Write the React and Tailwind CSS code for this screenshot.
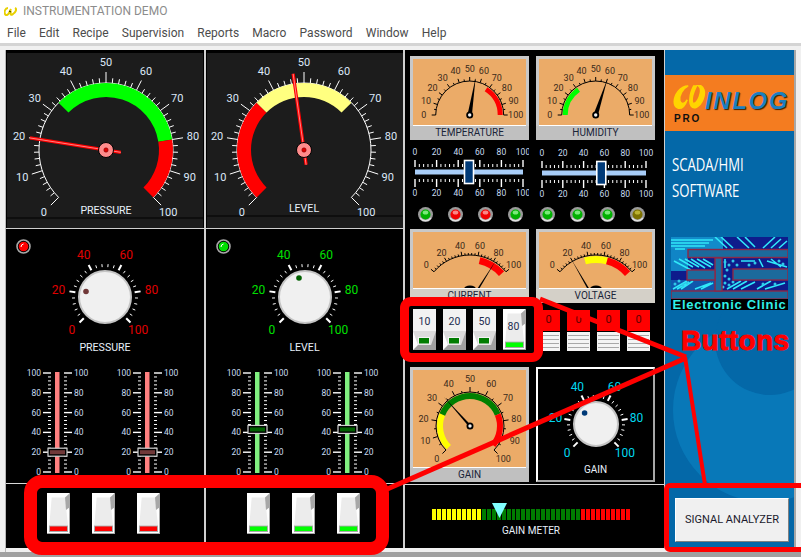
const pt = (cx, cy, r, deg) => {
  const a = (deg * Math.PI) / 180;
  return [cx + r * Math.sin(a), cy - r * Math.cos(a)];
};

const range = (from, to, step) => {
  const out = [];
  for (let v = from; v <= to + 0.001; v += step) out.push(v);
  return out;
};

function bandPath(cx, cy, r1, r2, a1, a2) {
  const [x1, y1] = pt(cx, cy, r2, a1);
  const [x2, y2] = pt(cx, cy, r2, a2);
  const [x3, y3] = pt(cx, cy, r1, a2);
  const [x4, y4] = pt(cx, cy, r1, a1);
  const large = a2 - a1 > 180 ? 1 : 0;
  return `M${x1} ${y1}A${r2} ${r2} 0 ${large} 1 ${x2} ${y2}L${x3} ${y3}A${r1} ${r1} 0 ${large} 0 ${x4} ${y4}Z`;
}

function Scale({ cx, cy, r, sweep, labels, minor, majorLen, minorLen, labelR, fontSize, color, stroke, bands = [], bandR = [r - 14, r], lineW = 1 }) {
  const ang = (v) => -sweep + (v / 100) * sweep * 2;
  const [ax, ay] = pt(cx, cy, r, ang(0));
  const [bx, by] = pt(cx, cy, r, ang(100));
  return (
    <g>
      <path d={`M${ax} ${ay}A${r} ${r} 0 ${sweep > 90 ? 1 : 0} 1 ${bx} ${by}`} fill="none" stroke={stroke} strokeWidth={lineW} />
      {bands.map((b) => (
        <path key={b.from} d={bandPath(cx, cy, bandR[0], bandR[1], ang(b.from), ang(b.to))} fill={b.color} />
      ))}
      {range(0, 100, minor).map((v) => {
        const major = labels.includes(v);
        const [x1, y1] = pt(cx, cy, r, ang(v));
        const [x2, y2] = pt(cx, cy, r + (major ? majorLen : minorLen), ang(v));
        return <line key={v} x1={x1} y1={y1} x2={x2} y2={y2} stroke={stroke} strokeWidth={lineW} />;
      })}
      {labels.map((v) => {
        const [x, y] = pt(cx, cy, labelR, ang(v));
        return (
          <text key={v} x={x} y={y} fill={color} fontSize={fontSize} textAnchor="middle" dominantBaseline="central">
            {v}
          </text>
        );
      })}
    </g>
  );
}

function BigGauge({ cx, value, bands, label, labelY, lineY }) {
  const cy = 100;
  const a = -135 + value * 2.7;
  const [tx, ty] = pt(cx, cy, 77, a);
  const [bx, by] = pt(cx, cy, 15, a + 180);
  return (
    <svg width="197" height="178" className="block">
      <rect x="1" y="3" width="196" height="175" fill="#1c1c1c" />
      <line x1="1" x2="197" y1={lineY} y2={lineY} stroke="#000" />
      <Scale cx={cx} cy={cy} r={67} sweep={135} labels={range(0, 100, 10)} minor={2} majorLen={11} minorLen={5} labelR={88} fontSize={11} color="#dce8f8" stroke="#fff" bands={bands} bandR={[53, 67]} />
      <text x={cx} y={labelY} fill="#e8f0fa" fontSize="10.6" textAnchor="middle" dominantBaseline="central">{label}</text>
      <line x1={tx} y1={ty} x2={bx} y2={by} stroke="#ff0000" strokeWidth="3.2" />
      <line x1={tx} y1={ty} x2={bx} y2={by} stroke="#ff8080" strokeWidth="1" />
      <circle cx={cx} cy={cy} r="7.5" fill="#ff8c8c" stroke="#000" strokeWidth="1" />
      <circle cx={cx} cy={cy} r="2.2" fill="#e00000" stroke="#600" strokeWidth="0.5" />
    </svg>
  );
}

function Led({ color, glow, size = 15 }) {
  return (
    <svg width={size} height={size} viewBox="0 0 15 15" className="block shrink-0">
      <circle cx="7.5" cy="7.5" r="7.5" fill="#9a9a9a" />
      <path d="M2 11a7 7 0 0 0 11 0" fill="none" stroke="#e0e0e0" strokeWidth="1.4" />
      <circle cx="7.5" cy="7.5" r="5" fill={color} />
      <ellipse cx="7.5" cy="5.5" rx="2.8" ry="2" fill={glow} opacity="0.75" />
    </svg>
  );
}

function StatusLamp({ color }) {
  return (
    <svg width="15" height="15" className="block">
      <circle cx="7.5" cy="7.5" r="6.5" fill="#000" stroke="#a8a8a8" strokeWidth="1.6" />
      <circle cx="7.5" cy="7.5" r="4.8" fill={color} />
      <path d="M5 8a3 3 0 0 1 2.5-3" fill="none" stroke="#fff" strokeWidth="1" />
    </svg>
  );
}

function Knob({ width, height, cx, cy, r, dot, dotColor, labelColor, labelR, fontSize = 12 }) {
  const ang = (v) => -135 + v * 2.7;
  return (
    <svg width={width} height={height} className="block overflow-visible">
      {range(0, 100, 4).map((v) => {
        const major = v % 20 === 0;
        const [x1, y1] = pt(cx, cy, r + 4, ang(v));
        const [x2, y2] = pt(cx, cy, r + (major ? 10 : 7), ang(v));
        return <line key={v} x1={x1} y1={y1} x2={x2} y2={y2} stroke="#fff" strokeWidth={major ? 2 : 1} />;
      })}
      {range(0, 100, 20).map((v) => {
        const [x, y] = pt(cx, cy, labelR, ang(v));
        return (
          <text key={v} x={x} y={y} fill={labelColor} fontSize={fontSize} textAnchor="middle" dominantBaseline="central">{v}</text>
        );
      })}
      <circle cx={cx} cy={cy} r={r} fill="#f0f0f0" stroke="#c4c4c4" strokeWidth="2" />
      <circle cx={cx + dot[0]} cy={cy + dot[1]} r="2.8" fill={dotColor} />
    </svg>
  );
}

function VSlider({ value, track, thumb }) {
  const cx = 45;
  const y = (v) => 8 + (100 - v) * 0.99;
  return (
    <svg width="90" height="115" className="block">
      {range(0, 100, 4).map((v) => (
        <g key={v}>
          {v % 20 === 0 ? null : <line x1={cx - 9} x2={cx - 6} y1={y(v)} y2={y(v)} stroke="#fff" />}
          {v % 20 === 0 ? null : <line x1={cx + 7} x2={cx + 10} y1={y(v)} y2={y(v)} stroke="#fff" />}
        </g>
      ))}
      {range(0, 100, 20).map((v) => (
        <g key={v}>
          <line x1={cx - 14} x2={cx - 6} y1={y(v)} y2={y(v)} stroke="#fff" strokeWidth="1.4" />
          <line x1={cx + 7} x2={cx + 15} y1={y(v)} y2={y(v)} stroke="#fff" strokeWidth="1.4" />
          <text x={cx - 16} y={y(v)} fill="#c8dcf0" fontSize="8.5" textAnchor="end" dominantBaseline="central">{v}</text>
          <text x={cx + 17} y={y(v)} fill="#c8dcf0" fontSize="8.5" dominantBaseline="central">{v}</text>
        </g>
      ))}
      <rect x={cx - 2} y="7" width="4.5" height="101" fill={track} />
      <rect x={cx - 9} y={y(value) - 4} width="19" height="8" fill="#000" stroke="#d0d0d0" strokeWidth="1.2" />
      <rect x={cx - 7} y={y(value) - 2} width="15" height="4" fill={thumb} />
    </svg>
  );
}

function HSlider({ x0, x1, value, trackY }) {
  const x = (v) => x0 + ((x1 - x0) * v) / 100;
  return (
    <svg width="119" height="52" className="block">
      {range(0, 100, 4).map((v) => {
        const major = v % 20 === 0;
        return (
          <g key={v}>
            <line x1={x(v)} x2={x(v)} y1={major ? trackY - 12 : trackY - 8} y2={trackY - 5} stroke="#fff" strokeWidth={major ? 1.4 : 1} />
            <line x1={x(v)} x2={x(v)} y1={trackY + 7} y2={major ? trackY + 15 : trackY + 10} stroke="#fff" strokeWidth={major ? 1.4 : 1} />
          </g>
        );
      })}
      {range(0, 100, 20).map((v) => (
        <g key={v}>
          <text x={x(v)} y={trackY - 20} fill="#c8dcf0" fontSize="8.5" textAnchor="middle" dominantBaseline="central">{v}</text>
          <text x={x(v)} y={trackY + 21} fill="#c8dcf0" fontSize="8.5" textAnchor="middle" dominantBaseline="central">{v}</text>
        </g>
      ))}
      <rect x={x0} y={trackY - 2.5} width={x1 - x0} height="5" fill="#a8cdf8" />
      <rect x={x(value) - 4.5} y={trackY - 11.5} width="9" height="23" fill="#003a78" stroke="#fff" strokeWidth="1.6" />
    </svg>
  );
}

function Rocker({ color, text }) {
  return (
    <svg width="23" height="41" className="block shrink-0">
      <rect width="23" height="41" fill="#fff" />
      <path d="M22.5 0V41M0 40.5H23" stroke="#a8a8a8" />
      <path d="M4.7 4.5H18L21 32H2.3Z" fill="#ececec" />
      <path d="M18 4.5L23 0V14L19 17Z" fill="#a8a8a8" />
      <rect x="2.5" y="33" width="18" height="5.5" fill={color} stroke="#a8a8a8" />
      {text ? <text x="10.5" y="17" fill="#1c2c50" fontSize="10.5" textAnchor="middle" dominantBaseline="central">{text}</text> : null}
    </svg>
  );
}

function PressedToggle({ text }) {
  return (
    <svg width="23" height="41" className="block shrink-0">
      <rect width="23" height="41" fill="#f2f2f2" />
      <path d="M0 22L5 36L0 41Z" fill="#fff" />
      <path d="M0 22H23L18 36H5Z" fill="#dcdcdc" />
      <path d="M23 22V41H0L5 36H18Z" fill="#a0a0a0" />
      <rect x="5.5" y="28.5" width="11" height="6.5" fill="#007c00" stroke="#f4f4f4" />
      <text x="11.5" y="12.5" fill="#1c2c50" fontSize="10.5" textAnchor="middle" dominantBaseline="central">{text}</text>
    </svg>
  );
}

function MeterPanel({ label, labelBg, height, children }) {
  return (
    <div className="w-[119px] border-[3px] border-b-0 border-[#c8c8c8] flex flex-col">
      <div className="bg-[#ebab68] overflow-hidden border-b border-white" style={{ height }}>
        {children}
      </div>
      <div className={`h-[14px] -mx-[3px] flex items-center justify-center text-[10px] leading-none text-[#1a2438] ${labelBg}`}>{label}</div>
    </div>
  );
}

function Needle({ cx, cy, len, deg, w = 2.2 }) {
  const [tx, ty] = pt(cx, cy, len, deg);
  const [ax, ay] = pt(cx, cy, w, deg - 90);
  const [bx, by] = pt(cx, cy, w, deg + 90);
  return <polygon points={`${tx},${ty} ${ax},${ay} ${bx},${by}`} fill="#000" />;
}

function Hub({ cx, cy }) {
  return <circle cx={cx} cy={cy} r="2.6" fill="#f0f0f0" stroke="#000" strokeWidth="1.8" />;
}

function HalfMeter({ value, bands }) {
  const cx = 56.7;
  const cy = 56;
  return (
    <svg width="113" height="67" className="block">
      <Scale cx={cx} cy={cy} r={34} sweep={90} labels={range(0, 100, 10)} minor={5} majorLen={4} minorLen={2} labelR={46} fontSize={9} color="#3a2a1a" stroke="#000" bands={bands} bandR={[28, 33]} />
      <Needle cx={cx} cy={cy} len={38} deg={-90 + value * 1.8} />
      <Hub cx={cx} cy={cy} />
    </svg>
  );
}

function ShallowMeter({ value, bands }) {
  const cx = 57;
  const cy = 70;
  const deg = -50 + value;
  return (
    <svg width="113" height="57" className="block">
      <Scale cx={cx} cy={cy} r={47} sweep={50} labels={range(0, 100, 20)} minor={4} majorLen={4} minorLen={2} labelR={57} fontSize={9} color="#3a2a1a" stroke="#000" bands={bands} bandR={[39, 46]} />
      <Needle cx={cx} cy={cy} len={50} deg={deg} w={1.2} />
      <ellipse cx={cx} cy={57} rx="6" ry="3.5" fill="#000" />
    </svg>
  );
}

function RoundMeter() {
  const cx = 57;
  const cy = 56;
  return (
    <svg width="113" height="96" className="block">
      <Scale cx={cx} cy={cy} r={34} sweep={135} labels={range(0, 100, 10)} minor={5} majorLen={5} minorLen={2} labelR={47} fontSize={9} color="#3a2a1a" stroke="#000"
        bands={[
          { from: 0, to: 25, color: '#ffff00' },
          { from: 25, to: 75, color: '#008000' },
          { from: 75, to: 98, color: '#ff0000' },
        ]}
        bandR={[27, 33]} />
      <Needle cx={cx} cy={cy} len={39} deg={-42} w={1.3} />
      <Hub cx={cx} cy={cy} />
    </svg>
  );
}

function InstrumentColumn({ width, gauge, lamp, knobLabel, knobColor, knobDot, dotColor, sliderValue, track, thumb, rockerColor }) {
  return (
    <div className="flex flex-col bg-black shrink-0" style={{ width }}>
      {gauge}
      <div className="h-px bg-[#d0d0d0] w-full" />
      <div className="h-[254px] flex flex-col">
        <div className="mt-[10px] ml-[10px] h-[15px]">
          <StatusLamp color={lamp} />
        </div>
        <div className="-mt-[4px] self-center">
          <Knob width={130} height={92} cx={65} cy={47} r={26} dot={knobDot} dotColor={dotColor} labelColor={knobColor} labelR={47} />
        </div>
        <div className="h-[12px] text-center text-[10.6px] leading-[12px] text-[#e8f0fa]">{knobLabel}</div>
        <div className="flex pl-[6px] mt-[11px]">
          <VSlider value={sliderValue} track={track} thumb={thumb} />
          <VSlider value={sliderValue} track={track} thumb={thumb} />
        </div>
      </div>
      <div className="h-px bg-[#d8d8d8] w-full" />
      <div className="flex-1 flex gap-[22px] pl-[41px] pt-[9px]">
        <Rocker color={rockerColor} />
        <Rocker color={rockerColor} />
        <Rocker color={rockerColor} />
      </div>
    </div>
  );
}

function RedDisplay() {
  return (
    <div className="w-[23px] shrink-0 mt-px flex flex-col gap-px">
      <div className="h-[21px] bg-[#ff0000] flex items-center justify-center text-[11px] text-[#600000]">0</div>
      <div className="h-[19px] bg-[#f4f4f4] flex flex-col justify-center gap-[3px] px-[1px]">
        <div className="h-px bg-[#a8a8a8]" />
        <div className="h-px bg-[#a8a8a8]" />
        <div className="h-px bg-[#a8a8a8]" />
        <div className="h-px bg-[#a8a8a8]" />
      </div>
    </div>
  );
}

function InstrumentsPanel() {
  const ledGreen = { color: '#00b000', glow: '#a0ffa0' };
  const ledRed = { color: '#f00000', glow: '#ffb0b0' };
  const ledYellow = { color: '#7c7000', glow: '#d0c840' };
  return (
    <div className="w-[259px] shrink-0 bg-black flex flex-col">
      <div className="h-[434px] flex flex-col pl-[5px] pt-[6px]">
        <div className="flex gap-[7px]">
          <MeterPanel label="TEMPERATURE" labelBg="bg-[#c0c0c0]" height={67}>
            <HalfMeter value={55} bands={[{ from: 68, to: 100, color: '#ff0000' }]} />
          </MeterPanel>
          <MeterPanel label="HUMIDITY" labelBg="bg-[#c0c0c0]" height={67}>
            <HalfMeter value={60} bands={[{ from: 0, to: 31, color: '#00ff00' }]} />
          </MeterPanel>
        </div>
        <div className="flex gap-[7px] mt-[8px]">
          <HSlider x0={5} x1={113} value={50} trackY={24} />
          <HSlider x0={6} x1={110} value={57} trackY={25} />
        </div>
        <div className="flex gap-[17px] mt-[7px] pl-[7.5px]">
          <div className="flex gap-[15px]">
            <Led {...ledGreen} />
            <Led {...ledRed} />
            <Led {...ledRed} />
            <Led {...ledGreen} />
          </div>
          <div className="flex gap-[15px]">
            <Led {...ledGreen} />
            <Led {...ledGreen} />
            <Led {...ledGreen} />
            <Led {...ledYellow} />
          </div>
        </div>
        <div className="flex gap-[7px] mt-[7px]">
          <MeterPanel label="CURRENT" labelBg="bg-[#d4d0c8]" height={57}>
            <ShallowMeter value={82} bands={[{ from: 63, to: 98, color: '#ff0000' }]} />
          </MeterPanel>
          <MeterPanel label="VOLTAGE" labelBg="bg-[#d4d0c8]" height={57}>
            <ShallowMeter value={20} bands={[{ from: 35, to: 65, color: '#ffff00' }, { from: 65, to: 98, color: '#ff0000' }]} />
          </MeterPanel>
        </div>
        <div className="flex gap-[7px] mt-[6px] pl-[3px]">
          <PressedToggle text="10" />
          <PressedToggle text="20" />
          <PressedToggle text="50" />
          <Rocker color="#00ff00" text="80" />
          <div className="w-[4px] -ml-[7px]" />
          <RedDisplay />
          <RedDisplay />
          <RedDisplay />
          <RedDisplay />
        </div>
        <div className="flex gap-[7px] mt-[16px]">
          <MeterPanel label="GAIN" labelBg="bg-[#c0c0c0]" height={98}>
            <RoundMeter />
          </MeterPanel>
          <div className="w-[119px] h-[115px] border-2 border-white border-r-[#a8a8a8] border-b-[#a8a8a8] flex flex-col items-center">
            <Knob width={110} height={92} cx={55} cy={55} r={22} dot={[-11.4, -11]} dotColor="#003a78" labelColor="#00d8f0" labelR={41} />
            <div className="text-[10px] leading-[12px] text-[#e8f0fa] mt-[3px]">GAIN</div>
          </div>
        </div>
      </div>
      <div className="h-px bg-[#d8d8d8]" />
      <div className="ml-[27px] w-[198px] mt-[24px] relative">
        <div className="flex gap-px h-[11px]">
          {range(1, 40, 1).map((i) => (
            <div key={i} className={`w-[4px] ${i <= 10 ? 'bg-[#ffff00]' : i <= 30 ? 'bg-[#007c00]' : 'bg-[#ff0000]'}`} />
          ))}
        </div>
        <svg width="15" height="15" className="absolute left-[60px] -top-[6px]">
          <polygon points="0,0 15,0 7.5,15" fill="#80ffff" />
        </svg>
        <div className="mt-[5px] text-center text-[10px] leading-[12px] text-[#e8f0fa]">GAIN METER</div>
      </div>
    </div>
  );
}

function CircuitLogo() {
  const bars = [
    [17, 12.5, 100, 8],
    [0, 54, 117, 8],
    [44, 21, 7, 33],
    [16, 33, 28, 10],
    [62, 32, 55, 11],
  ];
  const traces = [
    'M0 3H42M0 6H38M0 9H34M4 12H14M44 0L56 11M50 0L62 11M66 0L78 11M74 0L84 10M92 11L104 0M100 11L110 2M108 11L116 4',
    'M3 24L20 33M8 22L22 30M14 22L28 30M20 22L34 31M26 22L40 30M32 22L42 28',
    'M2 52L16 44M6 52L18 45M10 52L22 44M24 52L40 46M30 52L42 46M56 52L70 44M62 52L76 44M70 52L84 45M86 52L100 44M94 52L114 46',
    'M54 22V31M70 24H84M96 24L116 30M100 22L110 30M88 22L92 30',
  ];
  const dots = [
    [54, 25], [58, 28], [62, 24], [66, 28], [56, 33], [54, 39], [58, 42], [54, 46], [58, 48], [62, 45], [52, 50],
    [12, 48], [8, 44], [16, 46], [4, 47], [92, 47], [104, 47], [108, 24], [112, 27], [78, 28], [84, 26],
  ];
  return (
    <svg width="117" height="62" className="block">
      <rect width="117" height="62" fill="#0e1c8c" />
      <rect width="52" height="12" fill="#14a8d8" opacity="0.8" />
      <rect y="12" width="17" height="22" fill="#12a0d4" opacity="0.8" />
      <rect y="43" width="44" height="11" fill="#12a0d4" opacity="0.45" />
      <path d={traces.join('')} stroke="#30e8f8" strokeWidth="1.6" fill="none" />
      {dots.map(([x, y]) => (
        <circle key={`${x}-${y}`} cx={x} cy={y} r="1.5" fill="#30c8e8" />
      ))}
      {bars.map(([x, y, w, h]) => (
        <rect key={`${x}-${y}`} x={x} y={y} width={w} height={h} fill="#1c6a9c" stroke="#8c2848" strokeWidth="1.4" />
      ))}
    </svg>
  );
}

function WinlogLogo() {
  return (
    <svg width="34" height="26" viewBox="0 0 34 28" className="block shrink-0">
      <path d="M15 1C6 1 0 11 0 18C0 25 6 27 10 23C12 21 13 19 14 16C11 21 7 21 6 17C5 11 9 4 15 1Z" fill="#ffd400" stroke="#ffd400" strokeWidth="1.6" />
      <path d="M17 14C16 22 19 26 24 24C30 21 34 11 32 5C31 2 28 0 25 0C28 2 29 5 28 9C27 14 24 20 21 20C19 20 19 16 20 11C21 7 23 3 24 1H21C19 5 17 10 17 14Z" fill="#ffd400" stroke="#ffd400" strokeWidth="1.6" />
    </svg>
  );
}

function SidePanel() {
  return (
    <div className="w-[129px] shrink-0 ml-px relative overflow-hidden bg-[#0468a8] flex flex-col">
      <svg width="129" height="498" className="absolute left-0 top-0">
        <circle cx="100" cy="360" r="92" fill="#0878b8" />
        <circle cx="105" cy="290" r="55" fill="#0468a8" />
      </svg>
      <div className="relative mt-[25px] h-[56px] bg-[#f47c20] pl-[8px] pt-[10px]">
        <div className="flex h-[26px]">
          <WinlogLogo />
          <span className="text-[24px] leading-none font-bold italic text-[#1b7fc0] mt-[4px] -ml-[2px] tracking-[1.6px] [font-family:'Liberation_Sans',sans-serif] [text-shadow:1px_1px_1px_#402000]">INLOG</span>
        </div>
        <div className="text-[10px] leading-none font-bold tracking-[1.8px] text-[#101010] mt-[3px] ml-px [font-family:'Liberation_Sans',sans-serif]">PRO</div>
      </div>
      <div className="relative mt-[20px] ml-[7px] text-[18px] leading-[26px] text-white origin-left scale-x-[0.73] whitespace-nowrap [font-family:'Open_Sans',sans-serif]">
        <div>SCADA/HMI</div>
        <div>SOFTWARE</div>
      </div>
      <div className="relative mt-[34px] ml-[6px]">
        <CircuitLogo />
        <div className="w-[117px] h-[11px] bg-black text-[13px] leading-[11px] font-bold text-[#30f0e8] tracking-[0.7px] whitespace-nowrap text-center [font-family:'Liberation_Sans',sans-serif]">Electronic Clinic</div>
      </div>
      <button className="relative mt-auto mb-[6px] ml-[10px] w-[114px] h-[44px] shrink-0 bg-[#f0f0f0] border border-t-white border-l-white border-r-[#808080] border-b-[#808080] text-[11px] text-[#1a1a2c]">
        SIGNAL ANALYZER
      </button>
    </div>
  );
}

function Annotations() {
  return (
    <>
      <svg width="801" height="557" className="absolute left-0 top-0 pointer-events-none">
        <line x1="540" y1="299" x2="686" y2="357" stroke="#ff0000" strokeWidth="5" />
        <line x1="385" y1="490" x2="686" y2="358" stroke="#ff0000" strokeWidth="5" />
        <line x1="685" y1="357" x2="705" y2="485" stroke="#ff0000" strokeWidth="4" />
      </svg>
      <div className="absolute left-[400px] top-[297px] w-[143px] h-[65px] border-[9px] border-[#ff0000] rounded-[11px]" />
      <div className="absolute left-[24px] top-[475px] w-[365px] h-[80px] border-[13px] border-[#ff0000] rounded-[18px]" />
      <div className="absolute left-[664px] top-[483px] w-[150px] h-[69px] border-[5px] border-[#ff0000] rounded-[6px]" />
      <div className="absolute left-[681px] top-[325px] text-[28px] leading-[32px] font-bold text-[#ff0000] tracking-[0.4px] [-webkit-text-stroke:1px_#ff0000] [font-family:'Liberation_Sans',sans-serif]">Buttons</div>
    </>
  );
}

export default function App() {
  return (
    <div className="w-[801px] h-[557px] overflow-hidden relative bg-[#f0f0f0] flex flex-col [font-family:Roboto,sans-serif]">
      <div className="h-[22px] bg-white flex items-center pl-[4px] gap-[6px] shrink-0">
        <svg width="13" height="9" viewBox="0 0 13 9" className="block">
          <path d="M4 1C1 1 0 5 1 7C2 9 4 8 5 6L7 2M7 4C6 7 7 9 9 7C12 5 13 2 11 1" fill="none" stroke="#e8d000" strokeWidth="2" />
          <path d="M5 4L7 5" stroke="#303000" />
        </svg>
        <span className="text-[12px] text-[#8c8c8c]">INSTRUMENTATION DEMO</span>
      </div>
      <div className="h-[21px] bg-white flex items-center gap-[13.2px] pl-[7px] text-[12px] text-[#4c4c4c] shrink-0">
        <span>File</span>
        <span>Edit</span>
        <span>Recipe</span>
        <span>Supervision</span>
        <span>Reports</span>
        <span>Macro</span>
        <span>Password</span>
        <span>Window</span>
        <span>Help</span>
      </div>
      <div className="h-[509px] shrink-0 border-t-[3px] border-[#d4d4d4] pt-[4px] flex">
        <div className="w-[5px] shrink-0" />
        <div className="w-px bg-[#b8b8b8] shrink-0" />
        <div className="flex h-[498px] bg-[#d0d0d0] shrink-0">
          <InstrumentColumn
            width={198}
            gauge={<BigGauge cx={100} value={20} label="PRESSURE" labelY={160} lineY={168} bands={[{ from: 33.3, to: 80, color: '#00ff00' }, { from: 80, to: 100, color: '#ff0000' }]} />}
            lamp="#ff0000"
            knobLabel="PRESSURE"
            knobColor="#e00000"
            knobDot={[-19, -5.5]}
            dotColor="#703838"
            sliderValue={20}
            track="#ff8080"
            thumb="#703838"
            rockerColor="#ff0000"
          />
          <div className="w-[2px] shrink-0" />
          <InstrumentColumn
            width={197}
            gauge={<BigGauge cx={98} value={47} label="LEVEL" labelY={158} lineY={166} bands={[{ from: 0, to: 33.3, color: '#ff0000' }, { from: 33.3, to: 66.7, color: '#ffff80' }]} />}
            lamp="#00e000"
            knobLabel="LEVEL"
            knobColor="#00e000"
            knobDot={[-6, -19]}
            dotColor="#006000"
            sliderValue={43}
            track="#80f080"
            thumb="#006000"
            rockerColor="#00ff00"
          />
          <div className="w-[2px] shrink-0" />
          <InstrumentsPanel />
          <SidePanel />
        </div>
        <div className="w-[2px] h-[498px] bg-[#a8a8a8] shrink-0" />
      </div>
      <div className="flex-1 bg-[#a0a0a0]" />
      <Annotations />
    </div>
  );
}
